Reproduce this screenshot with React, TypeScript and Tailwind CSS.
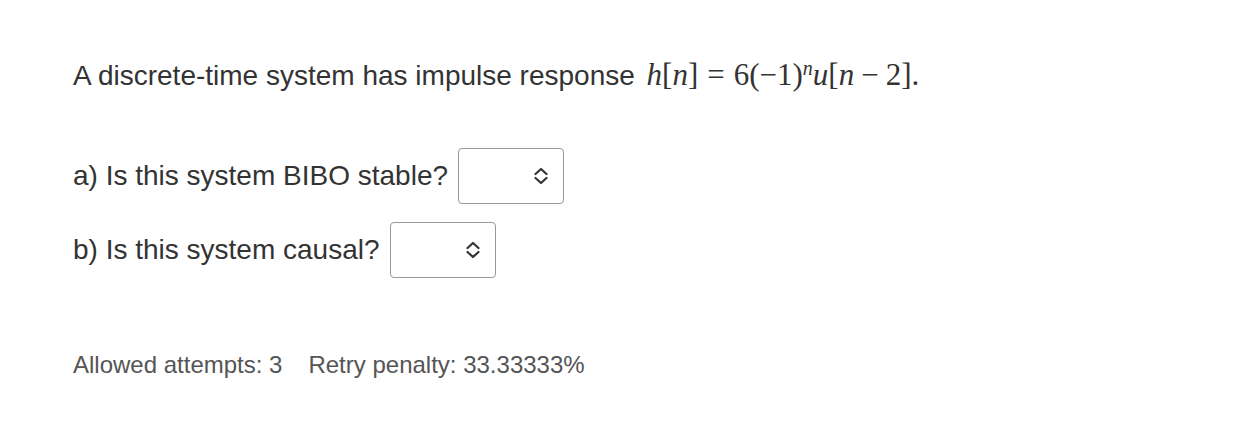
function Chevron() {
  return (
    <svg width="14" height="18" viewBox="0 0 14 18" fill="none" stroke="#333" strokeWidth="2.2" strokeLinecap="round" strokeLinejoin="round">
      <path d="M1.5 7 L7 2 L12.5 7" />
      <path d="M1.5 11 L7 16 L12.5 11" />
    </svg>
  );
}

function SelectBox() {
  return (
    <div className="ml-[10px] flex h-[56px] w-[106px] items-center justify-end rounded-[4px] border border-[#999] bg-white pr-[15px]">
      <Chevron />
    </div>
  );
}

const serif = { fontFamily: '"Liberation Serif", "DejaVu Serif", serif' };

export default function App() {
  return (
    <div className="h-[427px] w-[1249px] bg-white text-[#333] font-['Liberation_Sans',Arial,sans-serif]">
      <div className="px-[73px] pt-[56px]">
        <p className="text-[28px] leading-[38px]">
          A discrete-time system has impulse response{" "}
          <span className="ml-[4px] text-[31px]" style={serif}>
            <i>h</i>[<i>n</i>]<span className="mx-[9px]">=</span>6(−1)<sup className="text-[20px] italic">n</sup>
            <i>u</i>[<i>n</i><span className="mx-[7px]">−</span>2].
          </span>
        </p>

        <div className="mt-[53px] flex items-center">
          <span className="text-[28px]">a) Is this system BIBO stable?</span>
          <SelectBox />
        </div>
        <div className="mt-[18px] flex items-center">
          <span className="text-[28px]">b) Is this system causal?</span>
          <SelectBox />
        </div>

        <div className="mt-[69px] flex gap-[26px] text-[24px] text-[#555]">
          <span>Allowed attempts: 3</span>
          <span>Retry penalty: 33.33333%</span>
        </div>
      </div>
    </div>
  );
}
